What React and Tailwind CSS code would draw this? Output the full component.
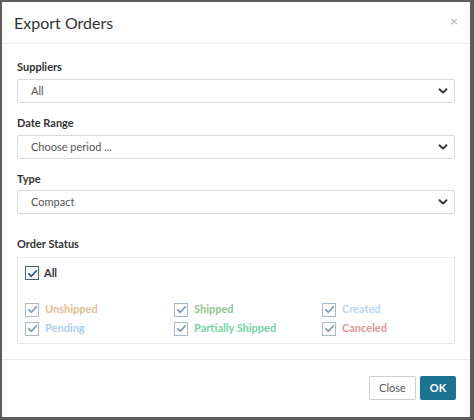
import React from "react";

function Chevron() {
  return (
    <svg width="10" height="10" viewBox="0 0 10 10" className="shrink-0">
      <path d="M1.5 3.2 L5 6.6 L8.5 3.2" fill="none" stroke="#333" strokeWidth="1.9" strokeLinecap="round" strokeLinejoin="round" />
    </svg>
  );
}

function Select({ value }) {
  return (
    <div className="h-[24px] border border-[#d9d9d9] rounded-[2px] bg-white flex items-center justify-between pl-[13px] pr-[6px]">
      <span className="text-[11px] text-[#555]">{value}</span>
      <Chevron />
    </div>
  );
}

function Check({ faded }) {
  return (
    <span
      className={
        "w-[14px] h-[14px] shrink-0 border flex items-center justify-center bg-white " +
        (faded ? "border-[#a9b9cc]" : "border-[#3d6388]")
      }
    >
      <svg width="11" height="11" viewBox="0 0 12 12">
        <path
          d="M2 6.3 L4.8 9 L10.2 3"
          fill="none"
          stroke={faded ? "#7f9bb8" : "#1f5b94"}
          strokeWidth="1.9"
          strokeLinecap="round"
          strokeLinejoin="round"
        />
      </svg>
    </span>
  );
}

function Status({ label, color }) {
  return (
    <div className="flex items-center gap-[6px] h-[16px]">
      <Check faded />
      <span className={"text-[11px] font-bold " + color}>{label}</span>
    </div>
  );
}

function Label({ children }) {
  return <div className="text-[11px] font-bold text-[#333] leading-[16px]">{children}</div>;
}

export default function App() {
  return (
    <div
      className="w-[474px] h-[420px] bg-[#5c5c5c] pl-[2px] pt-[2px] overflow-hidden"
      style={{ fontFamily: "Lato, 'Liberation Sans', sans-serif" }}
    >
      <div className="w-[468px] h-[415px] bg-white flex flex-col">
        <div className="h-[42px] border-b border-[#ececec] flex items-center justify-between pl-[12px] pr-[12px]">
          <span className="text-[16px] text-[#333]">Export Orders</span>
          <span className="text-[14px] text-[#c4c4c4] font-bold leading-none -mt-[4px]">×</span>
        </div>
        <div className="px-[15px] pt-[15px] pb-[15px] border-b border-[#ececec]">
          <Label>Suppliers</Label>
          <div className="mt-[4px]">
            <Select value="All" />
          </div>
          <div className="mt-[12px]">
            <Label>Date Range</Label>
          </div>
          <div className="mt-[4px]">
            <Select value="Choose period ..." />
          </div>
          <div className="mt-[12px]">
            <Label>Type</Label>
          </div>
          <div className="mt-[3px]">
            <Select value="Compact" />
          </div>
          <div className="mt-[22px]">
            <Label>Order Status</Label>
          </div>
          <div className="mt-[5px] h-[87px] border border-[#e8e8e8] pl-[7px] pt-[7px]">
            <div className="flex items-center gap-[5px]">
              <Check />
              <span className="text-[11px] font-bold text-[#333]">All</span>
            </div>
            <div className="grid grid-cols-[149px_148px_1fr] mt-[20px] gap-y-[3px]">
              <Status label="Unshipped" color="text-[#e3bc96]" />
              <Status label="Shipped" color="text-[#93c493]" />
              <Status label="Created" color="text-[#b5d5f3]" />
              <Status label="Pending" color="text-[#aacdf2]" />
              <Status label="Partially Shipped" color="text-[#74d3a2]" />
              <Status label="Canceled" color="text-[#e39494]" />
            </div>
          </div>
        </div>
        <div className="flex-1 flex items-start justify-end pr-[14px] pt-[16px] gap-[4px]">
          <div className="h-[24px] w-[47px] border border-[#cfcfcf] rounded-[2px] flex items-center justify-center text-[11px] text-[#555]">
            Close
          </div>
          <div className="h-[24px] w-[36px] bg-[#1c7391] rounded-[2px] flex items-center justify-center text-[11px] font-bold text-white">
            OK
          </div>
        </div>
      </div>
    </div>
  );
}
